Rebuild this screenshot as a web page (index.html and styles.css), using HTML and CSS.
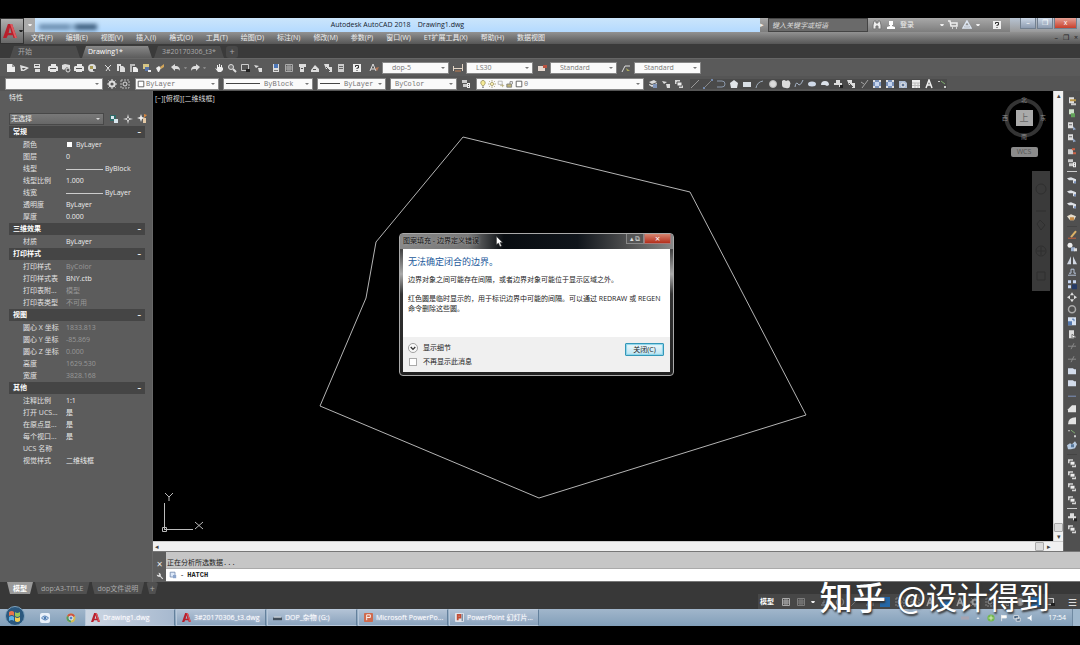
FILE: index.html
```html
<!DOCTYPE html>
<html lang="zh-CN">
<head>
<meta charset="utf-8">
<title>Autodesk AutoCAD 2018 Drawing1.dwg</title>
<link rel="stylesheet" href="styles.css">
</head>
<body>
<svg class="defs" aria-hidden="true">
<defs>
<symbol id="new" viewBox="0 0 10 10"><path d="M1 1h5l3 3v5H1z" fill="#eee"/><path d="M6 1v3h3" fill="#999"/></symbol>
<symbol id="open" viewBox="0 0 10 10"><path d="M1 2l7 2 2 1-5 3H2z" fill="#ddd"/><path d="M3 5h4L4 7z" fill="#555"/></symbol>
<symbol id="save" viewBox="0 0 10 10"><path d="M2 1h6v4H2zM3 6h5v3H3z" fill="#ddd"/><path d="M3 2h4v1H3z" fill="#555"/></symbol>
<symbol id="print" viewBox="0 0 10 10"><path d="M3 1h5v2h1l1 1v4H8v1H2V8H0V4l1-1h2z" fill="#e6e6e6"/><path d="M2 5h6v1H2z" fill="#555"/></symbol>
<symbol id="preview" viewBox="0 0 10 10"><path d="M1 2l3-1 5 1v4L6 4 3 7 1 6z" fill="#ddd"/><circle cx="7" cy="7" r="2" fill="none" stroke="#ddd"/></symbol>
<symbol id="globe" viewBox="0 0 10 10"><circle cx="5" cy="5" r="4" fill="#ddd"/><path d="M3 3h3v3H3z" fill="#a89b55"/><path d="M6 6h3v2H6z" fill="#555"/></symbol>
<symbol id="cut" viewBox="0 0 10 10"><path d="M2 2l3 3 3-3M5 5L3 8M5 5l2 3" stroke="#ddd" fill="none"/></symbol>
<symbol id="copy" viewBox="0 0 10 10"><path d="M1 1h4v2H3v5H1zM4 3h3l2 2v4H4z" fill="#ddd"/></symbol>
<symbol id="paste" viewBox="0 0 10 10"><path d="M1 1h5v2H3v6H1z" fill="#bbb"/><path d="M4 4h3l2 2v3H4z" fill="#eee"/></symbol>
<symbol id="match" viewBox="0 0 10 10"><path d="M1 1h6v5H1z" fill="#d6c685"/><path d="M3 4h4v4H3z" fill="#5874a8"/><path d="M6 7h3v2H6z" fill="#eee"/></symbol>
<symbol id="brush" viewBox="0 0 10 10"><path d="M1 5l3-2 2 2-2 4H3z" fill="#eee"/><path d="M5 4l4-3v3L6 6z" fill="#d3a65a"/></symbol>
<symbol id="undo" viewBox="0 0 10 10"><path d="M0 4l4-3v2c4 0 5 2 5 5C8 6 7 6 4 6v2z" fill="#ddd"/></symbol>
<symbol id="redo" viewBox="0 0 10 10"><path d="M10 4L6 1v2C2 3 1 5 1 8c1-2 2-2 5-2v2z" fill="#ddd"/></symbol>
<symbol id="hand" viewBox="0 0 10 10"><path d="M1 5l2 1V2h1v2h1V1h1v3h1V2h1v3l1-1v3L7 9H4z" fill="#eee"/></symbol>
<symbol id="lens" viewBox="0 0 10 10"><circle cx="4" cy="4" r="2.500" fill="#777" stroke="#ddd"/><path d="M6 6l3 3" stroke="#ddd" stroke-width="2"/></symbol>
<symbol id="window" viewBox="0 0 10 10"><path d="M1.500 1.500h7v6h-7z" fill="#555" stroke="#ccc"/><path d="M6 6h4v3H6z" fill="#222"/></symbol>
<symbol id="prev" viewBox="0 0 10 10"><path d="M1 2l5 1-3 2zM5 5h4v4H6z" fill="#ddd"/></symbol>
<symbol id="props" viewBox="0 0 10 10"><path d="M2 1h6v8H2z" fill="#ddd"/><path d="M3 1h4v4H3z" fill="#4e78b8"/><path d="M3 7h4v1H3z" fill="#777"/></symbol>
<symbol id="grid" viewBox="0 0 10 10"><path d="M1.500 1.500h7v7h-7zM4 1v8M6 1v8M1 4h8M1 6h8" fill="none" stroke="#aaa"/></symbol>
<symbol id="stack" viewBox="0 0 10 10"><path d="M2 1h7v3H7v5H3V4H2z" fill="#ddd"/><path d="M4 5h2v1H4z" fill="#555"/></symbol>
<symbol id="markup" viewBox="0 0 10 10"><path d="M1 7l4-5 4 4v3H1z" fill="#ddd"/><path d="M3 6h3v1H3z" fill="#555"/></symbol>
<symbol id="calc" viewBox="0 0 10 10"><path d="M2 1h6v8H2z" fill="#ccc"/><path d="M3 3h4v1H3zM3 5h4v1H3z" fill="#666"/></symbol>
<symbol id="help" viewBox="0 0 10 10"><path d="M1 1h8v8H1z" fill="#eee"/><path d="M3.500 4V2.500h3v2.500H5v1M5 7v1" fill="none" stroke="#333"/></symbol>
<symbol id="astyle" viewBox="0 0 10 10"><path d="M1 8l3-7 3 7M2 6h4" fill="none" stroke="#ddd"/><path d="M6 5l4-1-2 4z" fill="#b27555"/></symbol>
<symbol id="dim" viewBox="0 0 10 10"><path d="M.500 3v5M9.500 1v7M1 5.500h8" fill="none" stroke="#e2d4c4"/><path d="M2 7h6v2H2z" fill="#8c6b55"/></symbol>
<symbol id="tstyle" viewBox="0 0 10 10"><path d="M1 3h7v5H1z" fill="#e6d8cf"/><path d="M6 2h4v3H6z" fill="#b95240"/></symbol>
<symbol id="leader" viewBox="0 0 10 10"><path d="M1 9l3-6h5" fill="none" stroke="#ddd"/><path d="M5 5l4 3H6z" fill="#aaa85a"/></symbol>
<symbol id="gear" viewBox="0 0 10 10"><circle cx="5" cy="5" r="2.600" fill="none" stroke="#ddd" stroke-width="2"/><path d="M5 0v2M5 8v2M0 5h2M8 5h2M1.500 1.500l1 1M7.500 7.500l1 1M8.500 1.500l-1 1M1.500 8.500l1-1" stroke="#ddd"/></symbol>
<symbol id="frame" viewBox="0 0 10 10"><path d="M1 1h8v8H1z" fill="none" stroke="#bbb" stroke-dasharray="2 1"/><circle cx="5" cy="5" r="2" fill="none" stroke="#ddd"/></symbol>
<symbol id="layer" viewBox="0 0 10 10"><path d="M1 1h5v3H1zM2 5h4v3H2z" fill="#ccc"/><path d="M6 4h3v5H6z" fill="#eee"/><path d="M7 5h1v1H7zM7 7h1v1H7z" fill="#555"/></symbol>
<symbol id="bulb" viewBox="0 0 10 10"><path d="M5 .500a3 3 0 0 1 2 5L6 7H4L3 5.500a3 3 0 0 1 2-5z" fill="#f4e995" stroke="#99905a"/><path d="M4 8h2v2H4z" fill="#888"/></symbol>
<symbol id="sun" viewBox="0 0 10 10"><circle cx="5" cy="5" r="2" fill="#fff6b8" stroke="#a09664"/><path d="M5 0v2M5 8v2M0 5h2M8 5h2M1.500 1.500l1 1M8.500 1.500l-1 1M1.500 8.500l1-1M8.500 8.500l-1-1" stroke="#a09664"/></symbol>
<symbol id="freeze" viewBox="0 0 10 10"><path d="M1.500 1.500h5v4h-5z" fill="none" stroke="#aaa"/><path d="M4 7h5M7 5v4" stroke="#b5ab78"/></symbol>
<symbol id="lock" viewBox="0 0 10 10"><path d="M1 5h6v4H1z" fill="#c2b67a" stroke="#777"/><path d="M5 5V2h3v3" fill="none" stroke="#777"/></symbol>
<symbol id="box" viewBox="0 0 10 10"><path d="M1.500 1.500h7v7h-7z" fill="#fff" stroke="#444"/></symbol>
<symbol id="layers2" viewBox="0 0 10 10"><path d="M1 3l5-2 3 2-5 2zM1 5l3 1 5-2v1L4 8 1 6z" fill="#ddd"/><path d="M5 5h4v4H5z" fill="#8095ba"/></symbol>
<symbol id="line" viewBox="0 0 10 10"><path d="M1 9l8-8" stroke="#999"/></symbol>
<symbol id="xline" viewBox="0 0 10 10"><path d="M2 8l6-6" stroke="#888"/><path d="M0 8h2v2H0zM8 0h2v2H8z" fill="#7388aa"/></symbol>
<symbol id="pline" viewBox="0 0 10 10"><path d="M1 2h5q3 0 3 3T6 8H1" fill="none" stroke="#8b98ac"/></symbol>
<symbol id="pent" viewBox="0 0 10 10"><path d="M5 1l4 3-1 5H2L1 4z" fill="#e1e5e9"/></symbol>
<symbol id="rect" viewBox="0 0 10 10"><path d="M1 3h8v5H1z" fill="#d9dfe5"/></symbol>
<symbol id="arc" viewBox="0 0 10 10"><path d="M1 9q1-6 7-7" fill="none" stroke="#9eabba"/></symbol>
<symbol id="circ" viewBox="0 0 10 10"><circle cx="5" cy="5" r="3.500" fill="#ddd" stroke="#bbb"/></symbol>
<symbol id="cloud" viewBox="0 0 10 10"><path d="M1 2q2-2 4 0 3-2 4 1 1 2 0 3 0 4-4 3-4 0-4-3z" fill="#ddd"/></symbol>
<symbol id="spline" viewBox="0 0 10 10"><path d="M1 8q1-6 3-3t5-4" fill="none" stroke="#a8b6c9"/></symbol>
<symbol id="ell" viewBox="0 0 10 10"><ellipse cx="5" cy="5" rx="4" ry="2.500" fill="#cfd9e8"/></symbol>
<symbol id="ellarc" viewBox="0 0 10 10"><path d="M1 6q0-4 4-4t4 4l-2 1-2-1z" fill="#dbe1e9"/></symbol>
<symbol id="block" viewBox="0 0 10 10"><path d="M3 1h4v3h2v4H6V6H1V4h2z" fill="#ddd"/><path d="M7 6h3v3H7z" fill="#222"/></symbol>
<symbol id="block2" viewBox="0 0 10 10"><path d="M1 1h5v3h3v5H6V6H3z" fill="#ddd"/><path d="M3 4l4 4" stroke="#555"/></symbol>
<symbol id="point" viewBox="0 0 10 10"><path d="M2 3l3 2M9 1L3 9" stroke="#a5a5a5"/></symbol>
<symbol id="hatch" viewBox="0 0 10 10"><path d="M1 1h8v8H1z" fill="#7890b8"/><path d="M1 1h2v2H1zM7 1h2v2H7zM1 7h2v2H1zM7 7h2v2H7z" fill="#ddd"/><path d="M3 3h4v4H3z" fill="#c6d5ef"/></symbol>
<symbol id="region" viewBox="0 0 10 10"><path d="M1 2h6l2 2v5H1z" fill="#adbdd6"/><circle cx="5" cy="6" r="2" fill="#5d7295" stroke="#eee"/></symbol>
<symbol id="table" viewBox="0 0 10 10"><path d="M1 1h8v8H1z" fill="#eee"/><path d="M1 4h8M4 4v5M7 4v5M1 6.500h8" stroke="#bbb"/></symbol>
<symbol id="atext" viewBox="0 0 10 10"><path d="M2 9l3-8 3 8M3 6h4" fill="none" stroke="#eee" stroke-width="1.500"/></symbol>
<symbol id="dots" viewBox="0 0 10 10"><path d="M1 2h2v1H1zM7 7h2v2H7z" fill="#ccc"/><path d="M4 2l4 3" stroke="#7daa6e"/></symbol>
<symbol id="order1" viewBox="0 0 10 10"><path d="M2 1h5v6H2z" fill="#e0e0e0"/><path d="M3 3h6v2H3z" fill="#b89548"/><path d="M4 7h5v2H4z" fill="#ccc"/></symbol>
<symbol id="order2" viewBox="0 0 10 10"><path d="M2 1h5v5H2z" fill="#cfe1cc"/><path d="M4 5h4v4H4z" fill="#62a45a"/></symbol>
<symbol id="order3" viewBox="0 0 10 10"><path d="M1 1h5v6H1z" fill="#ddd"/><path d="M2 3h3v1H2z" fill="#666"/><path d="M6 5l3 3-3 1z" fill="#8fa4c4"/></symbol>
<symbol id="order4" viewBox="0 0 10 10"><path d="M1 3h5v5H1z" fill="#ccc"/><path d="M5 2h3v2H5zM6 6h3v2H6z" fill="#cc6145"/></symbol>
<symbol id="bird" viewBox="0 0 10 10"><path d="M0 3l4-1 5 2v4H6V5L2 5z" fill="#dcdfe4"/><path d="M7 6h2v2H7z" fill="#7891bd"/></symbol>
<symbol id="birdo" viewBox="0 0 10 10"><path d="M0 4l4-2 5 2-2 4H3z" fill="#e5dccc"/><path d="M3 5h4v3H3z" fill="#c58a45"/></symbol>
<symbol id="quick" viewBox="0 0 10 10"><path d="M0 4l3-1 1-3 1 3 3 1-3 1-1 3-1-3z" fill="#eee"/><path d="M6 4h3v5H6z" fill="#e4c9a6"/><path d="M7 0l3 1-3 3z" fill="#d7873f"/></symbol>
<symbol id="pickadd" viewBox="0 0 10 10"><path d="M1 1h6v6H1z" fill="#2f6b68"/><path d="M2 2h3v3H2zM5 5h4v4H5z" fill="#d9e6ee"/></symbol>
<symbol id="target" viewBox="0 0 10 10"><path d="M5 0l1 4 4 1-4 1-1 4-1-4-4-1 4-1z" fill="#ddd"/><circle cx="5" cy="5" r="1" fill="#555"/></symbol>
<symbol id="erase" viewBox="0 0 10 10"><path d="M9 1L4 7" stroke="#ddb267" stroke-width="2"/><path d="M1 8h8" stroke="#c5623d"/></symbol>
<symbol id="copy2" viewBox="0 0 10 10"><circle cx="3" cy="3" r="2.500" fill="#eee"/><path d="M4 5h4v4H4z" fill="#9cb1d0"/><path d="M7 6h3v3H7z" fill="#ddd"/></symbol>
<symbol id="mirror" viewBox="0 0 10 10"><path d="M4 1v8H0zM6 1v8h4z" fill="#d0d7e2"/></symbol>
<symbol id="offset" viewBox="0 0 10 10"><path d="M1 8h8M2 6h2V2h3v4h2" fill="none" stroke="#b6c3d7"/></symbol>
<symbol id="array" viewBox="0 0 10 10"><path d="M1 1h3v3H1zM6 1h3v3H6zM1 6h3v3H1z" fill="#c7d7f4"/><path d="M5 5h5v5H5z" fill="#263b66"/></symbol>
<symbol id="move" viewBox="0 0 10 10"><path d="M5 0l2 3H3zM5 10L3 7h4zM0 5l3-2v4zM10 5L7 3v4z" fill="#ddd"/></symbol>
<symbol id="rotate" viewBox="0 0 10 10"><circle cx="5" cy="5" r="3.500" fill="none" stroke="#aaa" stroke-width="1.500"/></symbol>
<symbol id="scale" viewBox="0 0 10 10"><path d="M1 1h8v8H1z" fill="#d6e1f1"/><path d="M1 5h4v4H1z" fill="#5579af"/><path d="M5 3h2v2" fill="none" stroke="#5579af"/></symbol>
<symbol id="stretch" viewBox="0 0 10 10"><path d="M2 1h5v8H2z" fill="#ddd"/><path d="M5 5l4 3-4 1z" fill="#fff" stroke="#777"/></symbol>
<symbol id="trim" viewBox="0 0 10 10"><path d="M1 5h8M4 8l3-6" stroke="#888"/></symbol>
<symbol id="break" viewBox="0 0 10 10"><path d="M1 2h5l1 1h2v5H1z" fill="#d3dceb"/></symbol>
<symbol id="join" viewBox="0 0 10 10"><path d="M1 5h8" stroke="#7d92bb"/></symbol>
<symbol id="chamf" viewBox="0 0 10 10"><path d="M1 9V6l4-4h4v7z" fill="#e3e3e3"/></symbol>
<symbol id="fillet" viewBox="0 0 10 10"><path d="M1 9q0-7 8-7v7z" fill="#e3e3e3"/></symbol>
<symbol id="explode" viewBox="0 0 10 10"><path d="M0 5l3-2 2 1 3-3 2 3-2 4-4 1H1z" fill="#b6c9df"/><path d="M4 4h3v3H4z" fill="#58799d"/></symbol>
<symbol id="front" viewBox="0 0 10 10"><path d="M1 1h5v4H1zM5 6h4v3H5z" fill="#d5d5d5"/><path d="M3 3h5v4H3z" fill="#eee" stroke="#555"/></symbol>
<symbol id="people" viewBox="0 0 10 10"><path d="M3 1h4v4H3z" fill="#fff"/><path d="M1 9V7l3-1V4h2v2l3 1v2z" fill="#fff"/></symbol>
<symbol id="bino" viewBox="0 0 10 10"><path d="M2 1h2v2h2V1h2l1 4v4H6V6H4v3H1V5z" fill="#eee" stroke="#777"/></symbol>
<symbol id="cart" viewBox="0 0 10 10"><path d="M0 1h2l1 5h6V3H3M4 8h1M8 8h1" fill="none" stroke="#eee" stroke-width="1.500"/></symbol>
<symbol id="tri" viewBox="0 0 10 10"><path d="M5 1l4 7H1zM3 6h4" fill="none" stroke="#dce5f1" stroke-width="1.500"/></symbol>
<symbol id="reda" viewBox="0 0 20 20"><path d="M7 0h6l7 20h-5l-1-4H7l-2 4H0zM10 5l-2 8h4z" fill="#b81f2c" fill-rule="evenodd"/><path d="M10 0h3l7 20h-3z" fill="#de5a5f"/></symbol>
</defs>
</svg>

<header class="head">
  <button class="logo" aria-label="应用程序菜单"><svg class="logo-a"><use href="#reda"/></svg><i class="caret dark"></i></button>
  <div class="titlebar">
    <button class="qat" aria-label="快速访问"><i class="caret light"></i></button>
    <div class="caption"><span class="smudge"></span><h1>Autodesk AutoCAD 2018 &nbsp;&nbsp; Drawing1.dwg</h1></div>
    <div class="info">
      <span class="arrow">▸</span>
      <input class="search" type="text" placeholder="键入关键字或短语" aria-label="搜索">
      <svg class="ic"><use href="#bino"/></svg><svg class="ic"><use href="#people"/></svg><button class="login">登录</button>
      <i class="caret light push"></i><svg class="ic"><use href="#cart"/></svg><svg class="ic"><use href="#tri"/></svg><i class="caret light"></i><svg class="ic helpic"><use href="#help"/></svg>
    </div>
    <div class="winbtns"><button class="wb" aria-label="最小化">–</button><button class="wb" aria-label="还原">❐</button><button class="wb close" aria-label="关闭">x</button></div>
  </div>
  <nav class="menubar">
    <button>文件(F)</button><button>编辑(E)</button><button>视图(V)</button><button>插入(I)</button><button>格式(O)</button><button>工具(T)</button><button>绘图(D)</button><button>标注(N)</button><button>修改(M)</button><button>参数(P)</button><button>窗口(W)</button><button>ET扩展工具(X)</button><button>帮助(H)</button><button>数据视图</button>
    <span class="docbtns"><button aria-label="最小化文档">–</button><button aria-label="还原文档">❐</button><button aria-label="关闭文档">×</button></span>
  </nav>
</header>

<nav class="tabs">
  <button class="tab start">开始</button><button class="tab active">Drawing1*</button><button class="tab">3#20170306_t3*</button><button class="plus">+</button>
</nav>

<div class="bar one">
  <div class="grp"><svg class="ic"><use href="#new"/></svg><svg class="ic"><use href="#open"/></svg><svg class="ic"><use href="#save"/></svg></div>
  <div class="grp"><svg class="ic"><use href="#print"/></svg><svg class="ic"><use href="#preview"/></svg><svg class="ic"><use href="#print"/></svg><svg class="ic"><use href="#globe"/></svg></div>
  <div class="grp"><svg class="ic"><use href="#cut"/></svg><svg class="ic"><use href="#copy"/></svg><svg class="ic"><use href="#paste"/></svg><svg class="ic"><use href="#match"/></svg><svg class="ic"><use href="#brush"/></svg></div>
  <div class="grp history-btns"><svg class="ic"><use href="#undo"/></svg><i class="caret"></i><svg class="ic"><use href="#redo"/></svg><i class="caret"></i></div>
  <div class="grp zoom-btns"><svg class="ic"><use href="#hand"/></svg><svg class="ic"><use href="#lens"/></svg><svg class="ic"><use href="#window"/></svg><svg class="ic"><use href="#prev"/></svg></div>
  <div class="grp"><svg class="ic"><use href="#props"/></svg><svg class="ic"><use href="#grid"/></svg><svg class="ic"><use href="#stack"/></svg><svg class="ic"><use href="#markup"/></svg><svg class="ic"><use href="#block2"/></svg><svg class="ic"><use href="#calc"/></svg></div>
  <div class="grp"><svg class="ic"><use href="#help"/></svg></div>
  <div class="styles">
    <svg class="ic"><use href="#astyle"/></svg><span class="combo w67"><select aria-label="文字样式"><option>dop-5</option></select></span>
    <svg class="ic"><use href="#dim"/></svg><span class="combo w67"><select aria-label="标注样式"><option>LS30</option></select></span>
    <svg class="ic"><use href="#tstyle"/></svg><span class="combo w67"><select aria-label="表格样式"><option>Standard</option></select></span>
    <svg class="ic"><use href="#leader"/></svg><span class="combo w67"><select aria-label="引线样式"><option>Standard</option></select></span>
  </div>
</div>

<div class="bar two">
  <span class="combo w98"><select aria-label="工作空间"><option></option></select></span>
  <div class="grp pad"><svg class="ic"><use href="#gear"/></svg><svg class="ic"><use href="#frame"/></svg></div>
  <span class="combo w84"><svg class="sw"><use href="#box"/></svg><select class="cad" aria-label="颜色"><option>ByLayer</option></select></span>
  <span class="combo w90"><i class="ln l34"></i><select class="cad" aria-label="线型"><option>ByBlock</option></select></span>
  <span class="combo w69"><i class="ln l20"></i><select class="cad" aria-label="线宽"><option>ByLayer</option></select></span>
  <span class="combo w67"><select class="cad" aria-label="打印样式"><option>ByColor</option></select></span>
  <div class="grp pad"><svg class="ic"><use href="#layer"/></svg></div>
  <span class="combo layers"><svg class="sw"><use href="#bulb"/></svg><svg class="sw"><use href="#sun"/></svg><svg class="sw"><use href="#freeze"/></svg><svg class="sw"><use href="#lock"/></svg><svg class="sw"><use href="#box"/></svg><select class="cad" aria-label="图层"><option>0</option></select></span>
  <div class="grp"><svg class="ic"><use href="#layers2"/></svg><svg class="ic"><use href="#prev"/></svg><svg class="ic"><use href="#front"/></svg></div>
  <div class="grp draw"><svg class="ic"><use href="#line"/></svg><svg class="ic"><use href="#xline"/></svg><svg class="ic"><use href="#pline"/></svg><svg class="ic"><use href="#pent"/></svg><svg class="ic"><use href="#rect"/></svg><svg class="ic"><use href="#arc"/></svg><svg class="ic"><use href="#circ"/></svg><svg class="ic"><use href="#cloud"/></svg><svg class="ic"><use href="#spline"/></svg><svg class="ic"><use href="#ell"/></svg><svg class="ic"><use href="#ellarc"/></svg><svg class="ic"><use href="#block"/></svg><svg class="ic"><use href="#block2"/></svg><svg class="ic"><use href="#point"/></svg><svg class="ic"><use href="#hatch"/></svg><svg class="ic"><use href="#hatch"/></svg><svg class="ic"><use href="#region"/></svg><svg class="ic"><use href="#table"/></svg><svg class="ic"><use href="#atext"/></svg><svg class="ic"><use href="#dots"/></svg></div>
</div>

<main class="work">
  <aside class="palette">
    <h2>特性</h2>
    <div class="pick"><span class="combo"><select aria-label="选择对象"><option>无选择</option></select></span><svg class="ic"><use href="#pickadd"/></svg><svg class="ic"><use href="#target"/></svg><svg class="ic"><use href="#quick"/></svg></div>
    <section><h3>常规<button aria-label="折叠常规">–</button></h3>
      <table>
        <tr><th>颜色</th><td><i class="chip"></i>ByLayer</td></tr>
        <tr><th>图层</th><td>0</td></tr>
        <tr><th>线型</th><td><i class="wire"></i>ByBlock</td></tr>
        <tr><th>线型比例</th><td>1.000</td></tr>
        <tr><th>线宽</th><td><i class="wire"></i>ByLayer</td></tr>
        <tr><th>透明度</th><td>ByLayer</td></tr>
        <tr><th>厚度</th><td>0.000</td></tr>
      </table></section>
    <section><h3>三维效果<button aria-label="折叠三维效果">–</button></h3>
      <table><tr><th>材质</th><td>ByLayer</td></tr></table></section>
    <section><h3>打印样式<button aria-label="折叠打印样式">–</button></h3>
      <table>
        <tr><th>打印样式</th><td class="dim">ByColor</td></tr>
        <tr><th>打印样式表</th><td>BNY.ctb</td></tr>
        <tr><th>打印表附...</th><td class="dim">模型</td></tr>
        <tr><th>打印表类型</th><td class="dim">不可用</td></tr>
      </table></section>
    <section><h3>视图<button aria-label="折叠视图">–</button></h3>
      <table>
        <tr><th>圆心 X 坐标</th><td class="dim">1833.813</td></tr>
        <tr><th>圆心 Y 坐标</th><td class="dim">-85.869</td></tr>
        <tr><th>圆心 Z 坐标</th><td class="dim">0.000</td></tr>
        <tr><th>高度</th><td class="dim">1629.530</td></tr>
        <tr><th>宽度</th><td class="dim">3828.168</td></tr>
      </table></section>
    <section><h3>其他<button aria-label="折叠其他">–</button></h3>
      <table>
        <tr><th>注释比例</th><td>1:1</td></tr>
        <tr><th>打开 UCS...</th><td>是</td></tr>
        <tr><th>在原点显...</th><td>是</td></tr>
        <tr><th>每个视口...</th><td>是</td></tr>
        <tr><th>UCS 名称</th><td></td></tr>
        <tr><th>视觉样式</th><td>二维线框</td></tr>
      </table></section>
  </aside>

  <div class="center">
    <div class="upper">
      <div class="viewport">
        <div class="canvas">
          <svg class="drawing" viewBox="0 0 900 450"><path d="M310 46L537 101 653 324 386 407 167 315 213 207 223 151z" fill="none" stroke="#b4b4b4"/></svg>
          <span class="viewlabel">[−][俯视][二维线框]</span>
          <svg class="ucs" viewBox="0 0 44 44"><path d="M4 38.500h29M4.500 38V12M2.500 36.500h4v4h-4zM5 2l4 4 4-4M9 6v4M35 31l8 7M43 31l-8 7" fill="none" stroke="#bbb"/></svg>
          <div class="cube">
            <svg viewBox="0 0 44 44"><circle cx="22" cy="22" r="17.500" fill="none" stroke="#343434" stroke-width="4"/><path d="M14 14h17v16H14z" fill="#aaa"/><g fill="#8d8d8d" font-size="6" text-anchor="middle"><text x="22" y="6">北</text><text x="22" y="43">南</text><text x="3" y="24">西</text><text x="41" y="24">东</text></g><text x="22" y="25" font-size="9" text-anchor="middle" fill="#666">上</text></svg>
            <button class="wcs">WCS</button>
          </div>
          <svg class="navbar" viewBox="0 0 18 120"><path d="M0 0h18v120H0z" fill="#3a3a3a"/><g fill="none" stroke="#2f2f2f"><circle cx="9" cy="18" r="5"/><path d="M4 40h10M5 53l3-4 5 5-4 5zM9 76v8M5 80h8"/><circle cx="9" cy="80" r="5"/><path d="M5 101h8v8H5z"/></g></svg>

          <section class="dialog" role="dialog" aria-labelledby="dlg-title">
            <header class="dlg-head"><h2 id="dlg-title">图案填充 - 边界定义错误</h2><button class="dhelp" aria-label="帮助">▴ ⧉</button><button class="dclose" aria-label="关闭对话框">×</button></header>
            <div class="dlg-body">
              <h3>无法确定闭合的边界。</h3>
              <p>边界对象之间可能存在间隔，或者边界对象可能位于显示区域之外。</p>
              <p>红色圆是临时显示的，用于标识边界中可能的间隔。可以通过 REDRAW 或 REGEN 命令删除这些圆。</p>
            </div>
            <footer class="dlg-foot">
              <div class="opts">
                <button class="details"><svg viewBox="0 0 11 11"><circle cx="5.500" cy="5.500" r="5" fill="#f8f8f8" stroke="#999"/><path d="M3 4.500l2.500 2.500L8 4.500" fill="none" stroke="#333" stroke-width="1.500"/></svg>显示细节</button>
                <label class="never"><input type="checkbox">不再显示此消息</label>
              </div>
              <button class="ok">关闭(C)</button>
            </footer>
          </section>
          <svg class="cursor" viewBox="0 0 7 11"><path d="M.500.500v8l2-1.500 1.500 3.500 1.500-.500L4 6.500h2.500z" fill="#fff" stroke="#444" stroke-width=".5"/></svg>
        </div>
        <div class="vscroll"><span>▴</span><i class="thumb"></i><span>▾</span></div>
        <div class="hscroll"><span>◂</span><i class="thumb"></i><span>▸</span></div>
      </div>
      <div class="tools">
        <svg><use href="#order1"/></svg><svg><use href="#order2"/></svg><svg><use href="#order3"/></svg><svg><use href="#order3"/></svg><svg><use href="#order4"/></svg><svg><use href="#layer"/></svg><hr>
        <svg><use href="#bird"/></svg><svg><use href="#bird"/></svg><svg><use href="#bird"/></svg><svg><use href="#birdo"/></svg><hr class="off">
        <svg><use href="#erase"/></svg><svg><use href="#copy2"/></svg><svg><use href="#mirror"/></svg><svg><use href="#offset"/></svg><svg><use href="#array"/></svg><svg><use href="#move"/></svg><svg><use href="#rotate"/></svg><svg><use href="#scale"/></svg><svg><use href="#stretch"/></svg><svg><use href="#trim"/></svg><svg><use href="#trim"/></svg><svg><use href="#break"/></svg><svg><use href="#break"/></svg><svg><use href="#join"/></svg><svg><use href="#chamf"/></svg><svg><use href="#fillet"/></svg><svg><use href="#dots"/></svg><svg><use href="#explode"/></svg><hr class="off">
        <svg><use href="#front"/></svg><svg><use href="#front"/></svg><svg><use href="#front"/></svg><svg><use href="#front"/></svg><hr>
        <svg><use href="#block"/></svg><svg><use href="#front"/></svg>
      </div>
    </div>
    <div class="command">
      <div class="grip"><span>×</span><svg viewBox="0 0 10 10"><path d="M1 3a3 3 0 0 0 4 3l3 3 1-1-3-3a3 3 0 0 0-3-4l1 2-1 1z" fill="#ddd"/></svg></div>
      <div class="lines">
        <div class="history">正在分析所选数据...</div>
        <label class="prompt"><svg viewBox="0 0 10 10"><path d="M1.500 1.500h6v6h-6z" fill="#dce8f8" stroke="#6f87ab"/><path d="M5 5h4v4H5z" fill="#8ba4cb"/></svg><span>-</span><input type="text" value="HATCH" aria-label="命令"></label>
      </div>
    </div>
  </div>
</main>

<div class="status">
  <nav class="layouts"><button class="on">模型</button><button>dop:A3-TITLE</button><button>dop文件说明</button><button class="plus">+</button></nav>
  <div class="modes"><button class="model">模型</button><svg class="ic"><use href="#grid"/></svg><svg class="ic faint"><use href="#grid"/></svg><i class="caret light"></i><svg class="ic faint"><use href="#offset"/></svg><svg class="ic faint"><use href="#rotate"/></svg><svg class="ic faint"><use href="#line"/></svg><svg class="ic faint"><use href="#offset"/></svg><i class="blue"></i><svg class="ic faint"><use href="#frame"/></svg><svg class="ic faint"><use href="#frame"/></svg><svg class="ic faint"><use href="#atext"/></svg><i class="blue"></i><svg class="ic faint"><use href="#atext"/></svg><svg class="ic faint"><use href="#gear"/></svg><svg class="ic faint"><use href="#frame"/></svg><svg class="ic faint"><use href="#layer"/></svg><svg class="ic faint"><use href="#circ"/></svg><i class="blue"></i><svg class="ic"><use href="#window"/></svg><span class="burger">☰</span></div>
</div>

<footer class="taskbar">
  <button class="orb" aria-label="开始菜单"><svg viewBox="0 0 20 20"><circle cx="10" cy="10" r="9.500" fill="#2b587e" stroke="#7fa3bf"/><path d="M4 6q3-2 5 0v4q-2-2-5 0z" fill="#e8734c"/><path d="M10 6q2 2 5 0v4q-3 2-5 0z" fill="#96c65c"/><path d="M4 11q3-2 5 0v4q-2-2-5 0z" fill="#5db3e6"/><path d="M10 11q2 2 5 0v4q-3 2-5 0z" fill="#f3cf55"/></svg></button>
  <svg class="quick" viewBox="0 0 10 10"><rect width="10" height="10" rx="2" fill="#e9f1fa"/><path d="M1.500 5q3-4 7 0-3 4-7 0z" fill="none" stroke="#4d7db5"/><circle cx="5" cy="5" r="1.500" fill="#4d7db5"/></svg>
  <svg class="quick" viewBox="0 0 10 10"><circle cx="5" cy="5" r="4.500" fill="#d3bd56"/><path d="M1 3a4.500 4.500 0 0 1 8 0L5 5z" fill="#cd5344"/><path d="M1 3a4.500 4.500 0 0 0 4 6.500V5z" fill="#4f9a64"/><circle cx="5" cy="5" r="2" fill="#5585c7" stroke="#eee"/></svg>
  <div class="tasks">
    <button class="lit"><svg><use href="#reda"/></svg>Drawing1.dwg</button>
    <button><svg><use href="#reda"/></svg>3#20170306_t3.dwg</button>
    <button><svg viewBox="0 0 10 10"><path d="M0 5h10v3H0z" fill="#43505d"/><path d="M1 4h8v1H1z" fill="#ddd"/></svg>DOP_杂物 (G:)</button>
    <button><svg viewBox="0 0 10 10"><rect width="10" height="10" rx="1" fill="#cf6a4d"/><path d="M3 8V2h4v3H3" fill="none" stroke="#fff"/></svg>Microsoft PowerPo...</button>
    <button><svg viewBox="0 0 10 10"><rect width="10" height="10" rx="1" fill="#e1e4ea"/><path d="M3 8V2h3v3H3" fill="none" stroke="#c24c34" stroke-width="2"/><path d="M8 1v8" stroke="#47617f"/></svg>PowerPoint 幻灯片...</button>
  </div>
  <div class="tray"><svg viewBox="0 0 10 10"><path d="M0 3h10v4H0z" fill="#a8a5b2"/></svg><svg viewBox="0 0 10 10"><path d="M3 6l2-2 2 2z" fill="#fff"/></svg><svg viewBox="0 0 10 10"><circle cx="5" cy="5" r="4.500" fill="#72b84d"/><path d="M5 2v6M2 5h6" stroke="#e8f8cf"/></svg><svg viewBox="0 0 10 10"><path d="M2 1v8M2 2h6v3H2z" fill="#fff" stroke="#eee"/></svg><svg viewBox="0 0 10 10"><path d="M1 2h6v4H1zM4 5h5v4H4z" fill="#45617f" stroke="#eee"/></svg><svg viewBox="0 0 10 10"><path d="M2 4h2l3-3v8L4 6H2z" fill="#fff"/></svg><time>17:54</time></div>
  <button class="peek" aria-label="显示桌面"></button>
</footer>
<div class="mark"><b>知乎</b><span>@设计得到</span></div>
</body>
</html>
```
FILE: styles.css
```css
* { box-sizing: border-box; }
html { height: 100%; }
body {
  margin: 0;
  height: 100%;
  min-height: 600px;
  padding: 18px 0 19px;
  display: flex;
  flex-direction: column;
  position: relative;
  overflow: hidden;
  background: #000;
  color: #ddd;
  font: 7px/12px "Open Sans", "Noto Sans CJK SC", sans-serif;
}
button, input, select {
  margin: 0;
  padding: 0;
  border: 0;
  background: none;
  color: inherit;
  font: inherit;
  appearance: none;
  outline: none;
  white-space: nowrap;
}
h1, h2, h3, p { margin: 0; font: inherit; }
.defs { position: absolute; width: 0; height: 0; }
.ic { width: 10px; height: 10px; flex: none; }
.faint { opacity: .55; }
.caret {
  flex: none;
  width: 3px;
  border-top: 2px solid #888;
  border-left: 1px solid transparent;
  border-right: 1px solid transparent;
}
.caret.dark { border-top-color: #222; width: 4px; }
.caret.light { border-top-color: #eee; width: 4px; }

/* title and menus */
.head { flex: none; display: grid; grid-template: 14px 12px / 24px 1fr; background: #555; }
.logo {
  grid-row: 1 / 3;
  display: flex;
  align-items: center;
  gap: 2px;
  padding-left: 2px;
  border: 1px solid #333;
  background: linear-gradient(#b0b0b0, #686868);
}
.logo-a { width: 14px; height: 16px; }
.titlebar { display: flex; min-width: 0; background: #b9ddfb; }
.qat { width: 11px; background: #aaa; display: flex; align-items: center; justify-content: center; }
.caption { flex: 1; position: relative; display: flex; justify-content: center; align-items: center; background: linear-gradient(#cbe5fb, #b4daff); }
.caption h1 { color: #15222e; font-size: 7px; line-height: 14px; }
.smudge {
  position: absolute;
  left: 4px;
  top: 6px;
  width: 58px;
  height: 6px;
  background: linear-gradient(90deg, #6d8fb0 50%, #9dc0df 58%, #3c5c7c 66%);
  filter: blur(2px);
}
.info { width: 250px; display: flex; align-items: center; gap: 4px; color: #eee; background: linear-gradient(#a8a8a8, #7d7d7d); }
.arrow { width: 4px; text-align: center; }
.search { width: 100px; height: 14px; padding-left: 3px; border: 1px solid #444; background: #6a6a6a; font-style: italic; }
.search::placeholder { color: #ddd; opacity: 1; }
.push { margin-left: auto; }
.helpic { margin: 0 8px; }
.winbtns { width: 70px; display: flex; align-items: flex-start; justify-content: flex-end; gap: 1px; padding: 0 3px 0 10px; background: linear-gradient(#b7c3d2, #999); }
.wb { flex: 2; height: 11px; line-height: 10px; color: #fff; background: linear-gradient(#cbd7e6, #8d9cb0); border: 1px solid #72808f; border-top: 0; }
.wb.close { flex: 3; background: linear-gradient(#e5a095, #c8402c); }
.menubar { display: flex; gap: 13px; padding-left: 7px; background: linear-gradient(#929292, #565656); color: #eee; overflow: hidden; }
.menubar button { line-height: 12px; }
.docbtns { margin-left: auto; padding-right: 2px; display: flex; gap: 5px; color: #222; }

.tabs { flex: none; height: 14px; padding: 2px 0 0 10px; display: flex; gap: 2px; background: #3a3a3a; }
.tab { width: 70px; height: 12px; padding-left: 8px; text-align: left; background: #4c4c4c; color: #aaa; clip-path: polygon(4px 0, 66px 0, 100% 100%, 0 100%); }
.tab.active { background: linear-gradient(#888, #5c5c5c); color: #fff; padding-left: 6px; }
.plus { width: 12px; color: #aaa; background: #484848; border-radius: 3px; font-size: 9px; line-height: 10px; }

/* toolbars */
.bar { flex: none; display: flex; align-items: center; background: #5a5a5a; }
.bar.one { height: 18px; padding-left: 6px; gap: 6px; border-top: 1px solid #666; }
.bar.two { height: 15px; padding-left: 5px; gap: 4px; background: #555; }
.grp { display: flex; align-items: center; gap: 3px; }
.history-btns, .zoom-btns { padding-right: 2px; }
.styles { display: flex; align-items: center; gap: 3px; padding-left: 1px; }
.styles .combo { margin-right: 1px; }
.pad { padding-right: 1px; }
.draw { margin-left: 2px; background: #4a4a4a; }
.combo { position: relative; flex: none; display: flex; align-items: center; height: 12px; background: #fafafa; color: #777; border: 1px solid #888; }
.combo::after { content: ""; position: absolute; right: 3px; top: 4px; border: 2px solid transparent; border-top-color: #777; }
.combo select { flex: 1; min-width: 0; height: 10px; line-height: 10px; padding-left: 4px; }
.styles select { padding-left: 9px; }
.cad { font-family: "Liberation Mono", monospace; }
.w98 { width: 98px; }
.w90 { width: 90px; }
.w84 { width: 84px; }
.w69 { width: 69px; }
.w67 { width: 67px; }
.layers { width: 168px; padding-left: 1px; }
.sw { width: 8px; height: 8px; margin-left: 1px; flex: none; }
.combo .sw + select { padding-left: 1px; }
.ln { flex: none; height: 1px; margin-left: 2px; background: #444; }
.l34 { width: 34px; }
.l20 { width: 20px; }

/* property palette */
.work { flex: 1; min-height: 0; display: flex; }
.palette { flex: none; width: 153px; padding: 1px 7px 0 9px; background: #5c5c5c; overflow: hidden; border-right: 1px solid #686868; }
.palette h2 { height: 19px; color: #eee; }
.pick { display: flex; align-items: center; gap: 4px; height: 15px; }
.pick .combo { width: 95px; margin-right: 1px; background: linear-gradient(#797979, #676767); color: #eee; border-color: #484848; }
.pick .combo::after { border-top-color: #ddd; }
.pick select { padding-left: 1px; }
.palette h3 { display: flex; justify-content: space-between; height: 12px; margin-bottom: 1px; padding: 0 4px; background: #454545; color: #fff; font-weight: 700; }
.palette table { border-collapse: collapse; width: 100%; table-layout: fixed; }
.palette tr { height: 12px; }
.palette th { width: 57px; padding: 0 0 0 14px; font-weight: 400; text-align: left; white-space: nowrap; color: #e2e2e2; }
.palette td { padding: 0; white-space: nowrap; color: #eee; }
.palette td.dim { color: #989898; }
.chip { display: inline-block; width: 5px; height: 5px; margin: 0 4px 0 1px; background: #fff; }
.wire { display: inline-block; width: 37px; height: 1px; margin-right: 2px; vertical-align: middle; background: #ccc; }

/* drawing area */
.center { flex: 1; min-width: 0; display: flex; flex-direction: column; }
.upper { flex: 1; min-height: 0; display: flex; }
.viewport { flex: 1; min-width: 0; display: grid; grid-template: 1fr 10px / 1fr 10px; background: #f1f1f1; }
.canvas { position: relative; min-height: 0; background: #000; overflow: hidden; }
.drawing { position: absolute; width: 100%; height: 100%; }
.viewlabel { position: absolute; left: 2px; top: 2px; color: #ddd; }
.ucs { position: absolute; left: 7px; bottom: 6px; width: 44px; height: 44px; }
.cube { position: absolute; right: 7px; top: 5px; width: 44px; display: flex; flex-direction: column; align-items: center; gap: 7px; }
.cube svg { width: 44px; height: 44px; overflow: visible; }
.wcs { width: 27px; height: 10px; border-radius: 2px; line-height: 10px; background: #8b8b8b; color: #555; }
.navbar { position: absolute; right: 3px; top: 80px; width: 18px; height: 120px; }
.cursor { position: absolute; left: 343px; top: 145px; width: 7px; height: 11px; }
.vscroll, .hscroll { display: flex; align-items: center; color: #444; line-height: 9px; }
.vscroll { flex-direction: column; border-left: 1px solid #ccc; }
.hscroll { grid-column: 1 / 3; border-top: 1px solid #ccc; padding: 0 12px 0 2px; }
.thumb { width: 9px; height: 9px; border: 1px solid #aaa; background: #ddd; border-radius: 1px; }
.vscroll .thumb { margin-top: auto; }
.hscroll .thumb { margin-left: auto; margin-right: 3px; }
.tools { flex: none; width: 17px; padding: 4px 3px 15px 3px; display: flex; flex-direction: column; align-items: center; background: #505050; border-left: 1px solid #6b6b6b; }
.tools svg { width: 10px; flex: 1 1 10px; min-height: 0; }
.tools hr { width: 100%; height: 1px; margin: 2px 0; border: 0; background: #ccc; flex: none; }
.tools hr.off { background: #444; }

/* message box */
.dialog {
  position: absolute;
  left: 246px;
  top: 142px;
  width: 275px;
  padding: 0 3px 3px;
  border: 1px solid #aaa;
  border-radius: 4px;
  background: linear-gradient(#777, #444 16px, #aaa 40px, #333 60px, #222);
  color: #222;
}
.dlg-head { display: flex; height: 15px; margin: 0 -3px; padding: 0 2px 0 3px; background: linear-gradient(90deg, #888, #777 25%, #080c10 38%, #10151b 65%, #555 85%, #888); border-radius: 3px 3px 0 0; }
.dlg-head h2 { flex: 1; color: #111; line-height: 14px; text-shadow: 0 0 3px #bbb; }
.dhelp { width: 18px; height: 10px; color: #ddd; line-height: 9px; background: #555; border: 1px solid #888; border-top: 0; }
.dclose { width: 27px; height: 10px; color: #fff; font-size: 9px; line-height: 8px; background: linear-gradient(#d78570, #b42f1c); border: 1px solid #a77; border-top: 0; }
.dlg-body { height: 88px; padding: 6px 5px 0; background: #fff; }
.dlg-body h3 { font-size: 9px; line-height: 14px; color: #245a9b; margin-bottom: 6px; }
.dlg-body p { line-height: 10px; margin-bottom: 9px; }
.dlg-foot { display: flex; justify-content: space-between; align-items: flex-start; height: 35px; padding: 5px 6px 0 5px; background: #f0f0f0; }
.opts { display: flex; flex-direction: column; align-items: flex-start; gap: 2px; }
.details, .never { display: flex; align-items: center; gap: 5px; }
.details svg { width: 10px; height: 10px; }
.never input { width: 8px; height: 8px; margin: 0 1px; border: 1px solid #aaa; background: #fff; }
.ok { width: 39px; height: 13px; margin-top: 1px; line-height: 10px; border: 1px solid #3497b8; border-radius: 1px; background: linear-gradient(#eef8fb, #bce4f2); box-shadow: inset 0 0 1px 1px #8bd4ea; }

/* command line */
.command { flex: none; display: flex; height: 31px; padding-top: 1px; background: #777; }
.grip { width: 13px; display: flex; flex-direction: column; align-items: center; gap: 2px; padding-top: 6px; color: #eee; font-size: 10px; background: #5d5d5d; }
.grip svg { width: 8px; height: 8px; }
.lines { flex: 1; display: flex; flex-direction: column; color: #222; font-family: "Liberation Mono", "Noto Sans CJK SC", monospace; }
.history { height: 17px; padding: 6px 0 0 1px; line-height: 10px; background: #c6c6c6; border-bottom: 1px solid #aaa; }
.prompt { display: flex; align-items: center; gap: 3px; height: 12px; padding-left: 3px; background: #fff; }
.prompt svg { width: 8px; height: 8px; }
.prompt input { flex: 1; font-weight: 700; }

/* layout tabs and modes */
.status { flex: none; height: 27px; display: flex; justify-content: space-between; background: #383838; }
.layouts { display: flex; gap: 2px; height: 12px; padding-left: 7px; }
.layouts button { padding: 0 6px; line-height: 11px; color: #aaa; background: #505050; clip-path: polygon(0 0, 100% 0, calc(100% - 3px) 100%, 3px 100%); }
.layouts button.on { background: #999; color: #fff; font-weight: 700; }
.layouts button.plus { padding: 0; }
.modes { align-self: flex-end; display: flex; align-items: center; gap: 5px; height: 15px; padding: 0 3px 0 2px; background: #474747; }
.model { color: #fff; font-weight: 700; margin-right: 2px; }
.blue { width: 10px; height: 10px; background: #2467a6; }
.burger { font-size: 10px; margin-left: 8px; }

/* taskbar */
.taskbar { flex: none; height: 17px; display: flex; align-items: center; padding-left: 5px; background: linear-gradient(#a1b6cb, #829fb9); color: #fff; }
.orb { width: 20px; height: 20px; flex: none; margin: -3px 15px 0 0; }
.orb svg { display: block; width: 20px; height: 20px; }
.quick { width: 10px; height: 10px; margin-right: 16px; flex: none; }
.tasks { display: flex; height: 17px; gap: 1px; margin-left: -7px; }
.tasks button { width: 90px; display: flex; align-items: center; gap: 3px; padding: 0 5px; overflow: hidden; text-shadow: 0 0 2px #dde; border: 1px solid #b8c8da; border-right-color: #63809c; background: linear-gradient(#b2c2d5, #8aa3bd); }
.tasks button.lit { background: linear-gradient(90deg, #ccd6e2, #a7b9cf); }
.tasks svg { width: 9px; height: 9px; flex: none; }
.tray { display: flex; align-items: center; gap: 5px; margin-left: auto; }
.tray svg { width: 8px; height: 8px; }
.tray time { margin: 0 6px 0 9px; }
.peek { width: 8px; height: 17px; background: #a0b8cd; border-left: 1px solid #708aa2; }

.mark {
  position: absolute;
  right: 30px;
  bottom: 29px;
  display: flex;
  align-items: center;
  gap: 11px;
  color: #fff;
  font: 31px/40px "Noto Sans CJK SC", sans-serif;
  text-shadow: 1px 2px 2px #333;
}
.mark b { font-size: 33px; font-weight: 500; }
```
